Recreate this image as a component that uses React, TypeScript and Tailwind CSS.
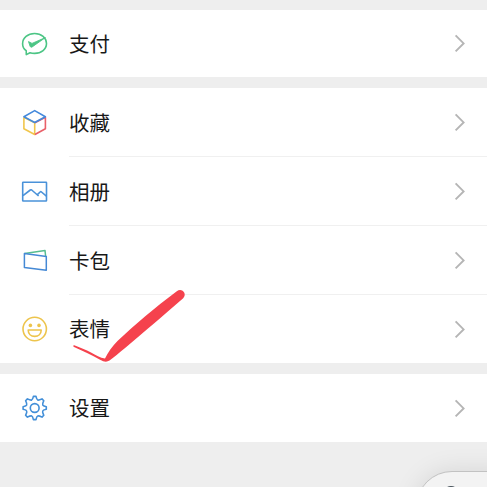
import type { ReactNode } from "react";

const PayIcon = () => (
  <svg viewBox="0 0 28 28" className="size-7" fill="none" stroke="#4cc585" strokeWidth="1.6" strokeLinejoin="round">
    <path d="M6.2 20.7C3.6 18.9 2.6 16.5 2.6 13.7C2.6 7.9 7.8 3.5 14.6 3.5S26.5 7.9 26.5 13.6S21.4 23.4 14.6 23.4C12.9 23.4 11.4 23.2 10 22.7L6.3 24.6Z" />
    <path d="M8.5 11.6L12 13.4L25.4 7.6L12.2 16.9C11.3 17.5 10.6 17.2 10.1 16.3Z" fill="#4cc585" strokeWidth="0.9" />
  </svg>
);

const FavoritesIcon = () => (
  <svg viewBox="0 0 28 28" className="size-7" fill="none" strokeWidth="1.6" strokeLinejoin="round">
    <path d="M3.9 8.2V19.7L14.7 25.5V13.8L3.9 8.2" stroke="#f1c64c" />
    <path d="M14.9 25.5L25.4 19.7V8.2L14.9 13.8" stroke="#e96069" />
    <path d="M3.9 7.7L14.7 1.6L25.4 7.7L14.7 13.5Z" stroke="#4489dc" />
  </svg>
);

const AlbumIcon = () => (
  <svg viewBox="0 0 28 28" className="size-7" fill="none" stroke="#4a92d9" strokeWidth="1.6" strokeLinejoin="round">
    <rect x="2.7" y="4.3" width="23.8" height="18.7" rx="0.5" />
    <path d="M3 17.7L10.3 12Q11 11.5 11.7 12L18.6 18M17.2 16.8L20.1 14Q20.8 13.4 21.5 14L26.4 18.2" />
  </svg>
);

const CardsIcon = () => (
  <svg viewBox="0 0 28 28" className="size-7" fill="none" strokeWidth="1.5" strokeLinejoin="round">
    <path d="M4.6 6.4L25 3.4L25.6 9" stroke="#57bd91" />
    <path d="M4.4 6.6L26.3 9.4V23.3L4.4 20.4Z" stroke="#4589d5" />
  </svg>
);

const StickerIcon = () => (
  <svg viewBox="0 0 28 28" className="size-7" fill="none" stroke="#edc44c" strokeWidth="1.6" strokeLinejoin="round">
    <circle cx="14.7" cy="14" r="11.7" />
    <circle cx="10.4" cy="10.4" r="1.8" fill="#edc44c" stroke="none" />
    <circle cx="19" cy="10.4" r="1.8" fill="#edc44c" stroke="none" />
    <path d="M8.2 15H21.2C21.2 19.1 18.4 21.4 14.7 21.4S8.2 19.1 8.2 15Z" />
  </svg>
);

const SettingsIcon = () => (
  <svg viewBox="0 0 28 28" className="size-7" fill="none" stroke="#438fd8" strokeWidth="1.6" strokeLinejoin="round">
    <g transform="translate(14.7 14)">
      <path d="M-1.3-11.6H1.3Q2-8.3 3-8Q4-7.5 7.3-9.1L9.1-7.3Q7.5-4 8-3Q8.3-2 11.6-1.3V1.3Q8.3 2 8 3Q7.5 4 9.1 7.3L7.3 9.1Q4 7.5 3 8Q2 8.3 1.3 11.6H-1.3Q-2 8.3-3 8Q-4 7.5-7.3 9.1L-9.1 7.3Q-7.5 4-8 3Q-8.3 2-11.6 1.3V-1.3Q-8.3-2-8-3Q-7.5-4-9.1-7.3L-7.3-9.1Q-4-7.5-3-8Q-2-8.3-1.3-11.6Z" />
      <circle r="4.4" />
    </g>
  </svg>
);

const Chevron = () => (
  <svg viewBox="0 0 12 20" className="h-5 w-3" fill="none" stroke="#b5b5b5" strokeWidth="1.9">
    <path d="M1.6 2.4L9.6 10.4L1.6 18.4" />
  </svg>
);

type RowProps = {
  icon: ReactNode;
  label: string;
  divider?: boolean;
};

const Row = ({ icon, label, divider }: RowProps) => (
  <button className="flex h-full w-full items-center pl-5 text-left">
    {icon}
    <span
      className={`ml-[21px] flex h-full flex-1 items-center justify-between border-b pr-[21px] ${
        divider ? "border-[#f0f0f0]" : "border-transparent"
      }`}
    >
      <span className="pb-px text-[20.5px] leading-7 text-[#181818]">{label}</span>
      <Chevron />
    </span>
  </button>
);

export default function App() {
  return (
    <div className="relative h-[487px] w-[487px] overflow-hidden bg-[#eeeeee] pt-[10px] font-['Noto_Sans_CJK_SC',sans-serif]">
      <div className="flex flex-col gap-[11px]">
        <section className="h-[67px] bg-white">
          <Row icon={<PayIcon />} label="支付" />
        </section>
        <section className="relative grid h-[275px] grid-rows-[69px_69px_69px_68px] bg-white">
          <Row icon={<FavoritesIcon />} label="收藏" divider />
          <Row icon={<AlbumIcon />} label="相册" divider />
          <Row icon={<CardsIcon />} label="卡包" divider />
          <Row icon={<StickerIcon />} label="表情" />
          {/* hand-drawn tick over the stickers row */}
          <svg viewBox="70 285 120 80" className="pointer-events-none absolute top-[197px] left-[70px] h-20 w-[120px]" fill="#f5424d">
            <path d="M74.3 345.2C80 347.8 86 349.8 91 352.4C96 355 100 357.8 105 358.6C108 352.5 112 346.5 117.5 341C135 324 155 307.5 176.8 291.2C182 287.4 187.5 294 183.2 298.2C163 316 143 332.5 126 347.2C119 353 113.5 357.5 109.5 360.6C106.5 362.6 103 361.4 100.5 360C91 354.7 83 350.7 74 346.9C72.9 346.3 73.1 344.8 74.3 345.2Z" />
          </svg>
        </section>
        <section className="h-[68px] bg-white">
          <Row icon={<SettingsIcon />} label="设置" />
        </section>
      </div>
      <div className="absolute top-[471px] left-[416px] h-20 w-[120px] rounded-[36px] border border-[#c2c2c2] bg-[#f3f3f3] shadow-[0_0_26px_rgba(0,0,0,0.10)]">
        <div className="absolute top-[14px] left-[26px] size-4 rounded-full bg-[#46515a]" />
      </div>
    </div>
  );
}
